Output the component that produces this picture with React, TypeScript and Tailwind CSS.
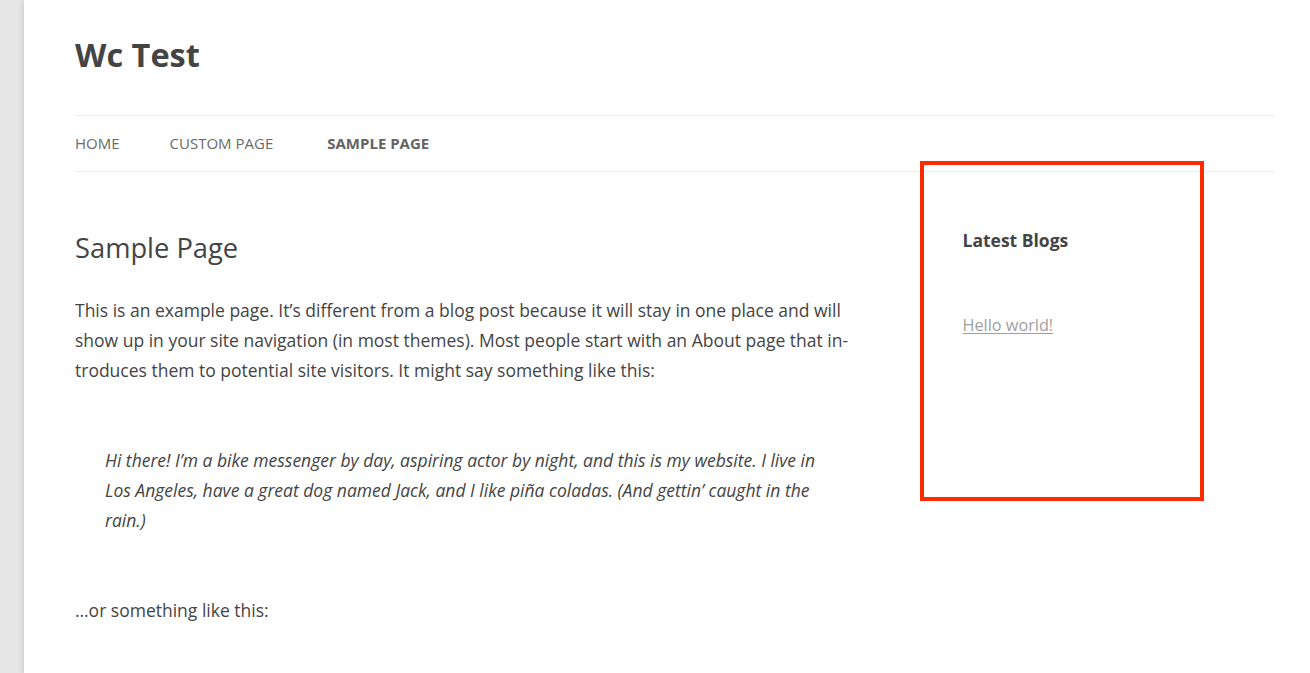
import React from "react";

const font = { fontFamily: '"Open Sans", "Noto Sans", Arial, sans-serif' };

const navItems = [
  { label: "HOME", current: false, gap: "mr-[50px]" },
  { label: "CUSTOM PAGE", current: false, gap: "mr-[54px]" },
  { label: "SAMPLE PAGE", current: true, gap: "mr-[50px]" },
];

export default function App() {
  return (
    <div className="flex min-h-[673px] bg-[#e6e6e6] text-[#444]" style={font} lang="en">
      {/* page sheet */}
      <div className="relative ml-[24px] flex-1 overflow-hidden bg-white pl-[51px] pr-[35px] shadow-[0_2px_6px_rgba(100,100,100,0.3)]">
        <header className="w-[1200px]">
          <h1 className="pt-[35px] text-[32.5px] font-bold leading-[40px] text-[#444]">Wc Test</h1>
          <nav className="mt-[40px] flex h-[57px] items-center border-y border-[#ededed] pb-[2px]">
            {navItems.map((item) => (
              <a
                key={item.label}
                className={
                  item.current
                    ? `${item.gap} text-[15px] font-bold leading-[20px] text-[#636363]`
                    : `${item.gap} text-[15px] leading-[20px] text-[#6a6a6a]`
                }
              >
                {item.label}
              </a>
            ))}
          </nav>
        </header>

        <div className="flex w-[1200px] justify-between">
          {/* Main column */}
          <main className="w-[781px]">
            <h2 className="mt-[61px] text-[27.3px] font-normal leading-[30px] text-[#444]">Sample Page</h2>
            <div className="mt-[32px] text-[17.5px] leading-[30px]">
              <p className="mb-[30px]">
                This is an example page. It’s different from a blog post because it will stay in one place and will
                show up in your site navigation (in most themes). Most people start with an About page that in{"\u00AD"}troduces
                them to potential site visitors. It might say something like this:
              </p>
              <blockquote className="mb-[30px] p-[30px] italic">
                <p>
                  Hi there! I’m a bike messenger by day, aspiring actor by night, and this is my website. I live in
                  Los Angeles, have a great dog named Jack, and I like piña coladas. (And gettin’ caught in the
                  rain.)
                </p>
              </blockquote>
              <p>…or something like this:</p>
            </div>
          </main>

          {/* Sidebar */}
          <aside className="w-[312.5px]">
            <h3 className="mt-[56px] text-[17.5px] font-bold leading-[24px] text-[#444]">Latest Blogs</h3>
            <ul className="mt-[61px]">
              <li>
                <a className="text-[16.25px] leading-[24px] text-[#9f9f9f] underline underline-offset-2">Hello world!</a>
              </li>
            </ul>
          </aside>
        </div>

        {/* annotation box over the sidebar */}
        <div className="pointer-events-none absolute left-[896px] top-[161px] h-[340px] w-[284px] border-[4px] border-[#ff2b00]" />
      </div>
    </div>
  );
}
